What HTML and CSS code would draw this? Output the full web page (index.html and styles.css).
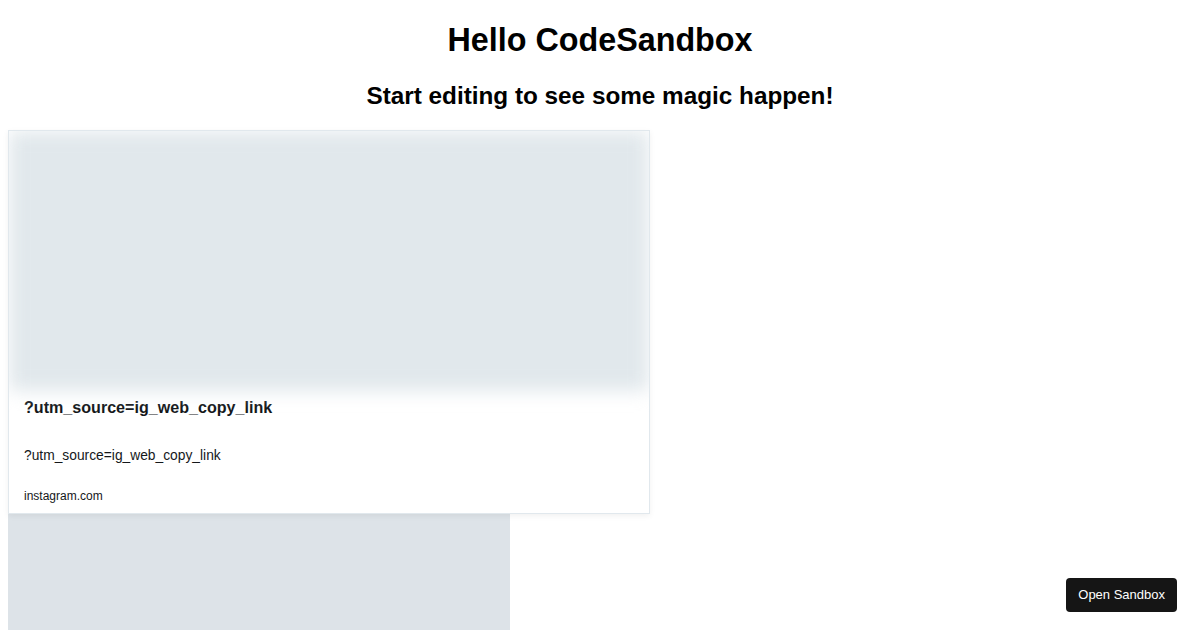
FILE: index.html
```html
<!DOCTYPE html>
<html>
<head>
<meta charset="utf-8">
<link rel="stylesheet" href="styles.css">
</head>
<body>
<div class="app">
  <h1 class="title">Hello CodeSandbox</h1>
  <h2 class="subtitle">Start editing to see some magic happen!</h2>
  <div class="card">
    <div class="media"><div class="media-blur"></div></div>
    <div class="content">
      <div class="card-title">?utm_source=ig_web_copy_link</div>
      <div class="card-desc">?utm_source=ig_web_copy_link</div>
      <div class="card-domain">instagram.com</div>
    </div>
  </div>
  <div class="embed"></div>
</div>
<a class="open-btn">Open Sandbox</a>
</body>
</html>
```
FILE: styles.css
```css
html, body {
  margin: 0;
  padding: 0;
  background: #fff;
  overflow: hidden;
  height: 630px;
}
body {
  padding: 8px 8px 0;
  box-sizing: border-box;
  font-family: "Liberation Sans", Arial, sans-serif;
  color: #000;
}
.app {
  text-align: center;
}
.title {
  font-size: 32.3px;
  font-weight: bold;
  margin: 14px 0 0;
  line-height: 37px;
}
.subtitle {
  font-size: 24.3px;
  font-weight: bold;
  margin: 23px 0 0;
  line-height: 28px;
}
.card {
  margin-top: 20px;
  width: 642px;
  box-sizing: border-box;
  border: 1px solid #e1e8ed;
  background: #fff;
  text-align: left;
  box-shadow: 0 2px 6px rgba(0, 0, 0, 0.06);
  position: relative;
  z-index: 1;
  overflow: hidden;
}
.media {
  height: 260px;
}
.media-blur {
  height: 100%;
  background: #e1e8ec;
  filter: blur(9px);
}
.content {
  padding: 6px 15px 9px;
  color: #14171a;
}
.card-title {
  font-size: 16.1px;
  font-weight: bold;
  line-height: 20px;
}
.card-desc {
  margin-top: 30px;
  font-size: 13.8px;
  line-height: 18px;
}
.card-domain {
  margin-top: 23px;
  font-size: 12px;
  line-height: 16px;
}
.embed {
  width: 502px;
  height: 116px;
  background: #dde3e8;
}
.open-btn {
  position: fixed;
  right: 23px;
  bottom: 18px;
  background: #151515;
  color: #fff;
  font-size: 13px;
  line-height: 34px;
  height: 34px;
  padding: 0 12px;
  border-radius: 4px;
  font-family: "Liberation Sans", Arial, sans-serif;
}
```
